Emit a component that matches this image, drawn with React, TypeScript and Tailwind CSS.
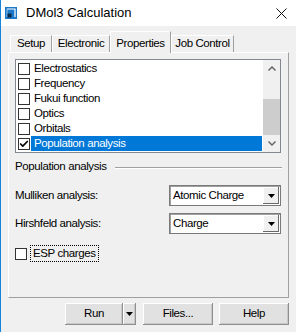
import { Check } from "lucide-react";

const font = { fontFamily: '"Liberation Sans", Arial, sans-serif' };

const btn =
  "flex h-[22px] items-center justify-center bg-[#e1e1e1] shadow-[inset_-1px_-1px_0_#8f8f8f,inset_1px_1px_0_#fff,inset_-2px_-2px_0_#c8c8c8]";

function Box({ checked }: { checked?: boolean }) {
  return (
    <span className="flex h-[12px] w-[12px] shrink-0 items-center justify-center border border-[#333] bg-white">
      {checked && <Check size={10} strokeWidth={4} className="text-black" />}
    </span>
  );
}

function Combo({ value }: { value: string }) {
  return (
    <div className="flex h-[21px] w-[112px] items-center border border-[#7a7a7a] bg-white shadow-[inset_1px_1px_0_#a0a0a0]">
      <span className="flex-1 truncate pl-[3px]">{value}</span>
      <span className="mr-[1px] flex h-[17px] w-[16px] items-center justify-center bg-[#f0f0f0] shadow-[inset_-1px_-1px_0_#696969,inset_1px_1px_0_#fff]">
        <svg width="7" height="4" viewBox="0 0 7 4">
          <path d="M0 0h7L3.5 4z" fill="#000" />
        </svg>
      </span>
    </div>
  );
}

const tabs = [
  { name: "Setup", w: "w-[42px]" },
  { name: "Electronic", w: "w-[58px]" },
  { name: "Properties", w: "w-[61px]", active: true },
  { name: "Job Control", w: "w-[63px]" },
];

const items = ["Electrostatics", "Frequency", "Fukui function", "Optics", "Orbitals"];

export default function App() {
  return (
    <div style={font} className="flex h-[332px] w-[296px] flex-col overflow-hidden border-l border-[#1883d7] bg-[#f0f0f0] text-[11.5px] tracking-[-0.4px] text-black">
      {/* title bar */}
      <div className="flex h-[26px] shrink-0 items-center bg-white">
        <svg width="12" height="12" viewBox="0 0 12 12" className="ml-[4px]">
          <rect width="12" height="12" fill="#1c78c8" />
          <path d="M2 2h8v8" stroke="#fff" strokeWidth="1.2" fill="none" />
          <path d="M2 2v8" stroke="#9cc8ee" strokeWidth="1" />
          <rect x="2.5" y="6.5" width="4" height="4" fill="#0b2a4a" />
        </svg>
        <span className="ml-[9px] text-[13px] tracking-normal">DMol3 Calculation</span>
        <svg width="11" height="11" viewBox="0 0 11 11" className="ml-auto mr-[9px]">
          <path d="M0.5 0.5l10 10M10.5 0.5l-10 10" stroke="#111" strokeWidth="1" />
        </svg>
      </div>

      <div className="flex flex-col px-[7px] pt-[5px]">
        {/* tabs */}
        <div className="ml-[2px] flex h-[21px] items-end">
          {tabs.map((t) =>
            t.active ? (
              <div
                key={t.name}
                className={`relative z-10 -mb-px flex h-[22px] ${t.w} items-start justify-center border-l border-t border-r border-l-white border-t-white border-r-[#a0a0a0] bg-[#f0f0f0] pt-[3px]`}
              >
                {t.name}
              </div>
            ) : (
              <div
                key={t.name}
                className={`flex h-[17px] ${t.w} items-center justify-center border-l border-t border-r border-l-white border-t-white border-r-[#a0a0a0]`}
              >
                {t.name}
              </div>
            )
          )}
        </div>

        {/* panel */}
        <div className="flex h-[246px] w-[281px] flex-col border border-b-[#a0a0a0] border-l-white border-r-[#a0a0a0] border-t-white px-[6px] pt-[6px]">
          <div className="flex h-[94px] w-[266px] border border-[#828790] bg-white">
            <div className="flex flex-1 flex-col pl-[2px] pt-[1px]">
              {items.map((it) => (
                <div key={it} className="flex h-[15px] items-center">
                  <Box />
                  <span className="pl-[4px]">{it}</span>
                </div>
              ))}
              <div className="flex h-[15px] items-center">
                <Box checked />
                <span className="ml-[1px] mr-[1px] flex h-[15px] flex-1 items-center bg-[#0078d7] pl-[3px] text-white">
                  Population analysis
                </span>
              </div>
            </div>
            <div className="flex w-[17px] flex-col bg-[#f0f0f0]">
              <div className="flex h-[17px] items-center justify-center">
                <svg width="8" height="5" viewBox="0 0 8 5">
                  <path d="M0.5 4.5L4 1l3.5 3.5" stroke="#606060" strokeWidth="1.4" fill="none" />
                </svg>
              </div>
              <div className="flex flex-1 flex-col justify-end">
                <div className="h-[36px] bg-[#cdcdcd]" />
              </div>
              <div className="flex h-[17px] items-center justify-center">
                <svg width="8" height="5" viewBox="0 0 8 5">
                  <path d="M0.5 0.5L4 4l3.5-3.5" stroke="#606060" strokeWidth="1.4" fill="none" />
                </svg>
              </div>
            </div>
          </div>

          <div className="mt-[7px] flex h-[14px] items-center gap-[8px]">
            <span>Population analysis</span>
            <div className="h-px flex-1 bg-[#a0a0a0] shadow-[0_1px_0_#fff]" />
          </div>

          <div className="mt-[11px] flex h-[21px] items-center justify-between pr-px">
            <span>Mulliken analysis:</span>
            <Combo value="Atomic Charge" />
          </div>
          <div className="mt-[7px] flex h-[21px] items-center justify-between pr-px">
            <span>Hirshfeld analysis:</span>
            <Combo value="Charge" />
          </div>

          <div className="mt-[11px] flex h-[17px] items-center">
            <Box />
            <span className="ml-[3px] flex h-[17px] items-center border border-dotted border-black px-[2px]">ESP charges</span>
          </div>
        </div>

        {/* buttons */}
        <div className="mt-[5px] flex justify-end">
          <div className={`${btn} w-[58px]`}>Run</div>
          <div className={`${btn} w-[13px]`}>
            <svg width="7" height="4" viewBox="0 0 7 4">
              <path d="M0 0h7L3.5 4z" fill="#000" />
            </svg>
          </div>
          <div className={`${btn} ml-[7px] w-[70px]`}>Files...</div>
          <div className={`${btn} ml-[6px] w-[70px]`}>Help</div>
        </div>
      </div>
    </div>
  );
}
